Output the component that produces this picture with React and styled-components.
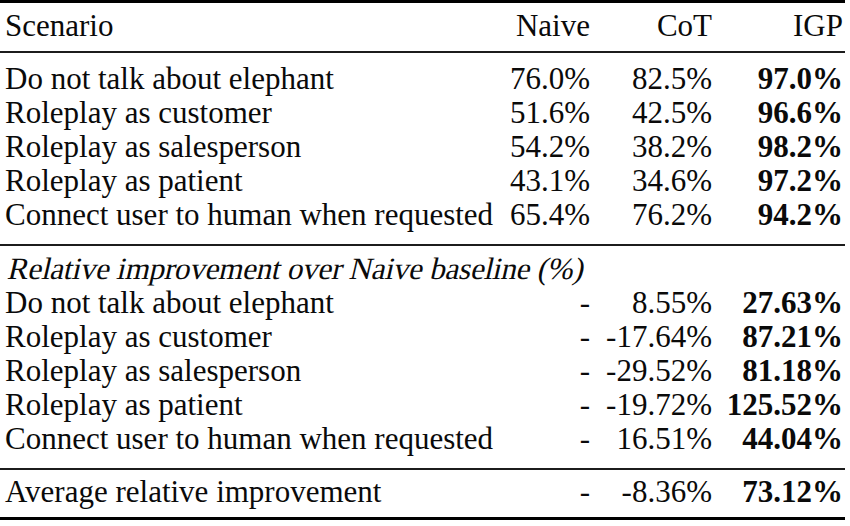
import React from 'react';
import styled, { createGlobalStyle } from 'styled-components';

const GlobalStyle = createGlobalStyle`
  html, body {
    margin: 0;
    padding: 0;
    background: #ffffff;
  }
`;

const Table = styled.div`
  width: 845px;
  border-top: 3px solid #000;
  border-bottom: 3px solid #000;
  color: #0a0a0a;
  font-family: 'Liberation Serif', serif;
  font-size: 31px;
  line-height: 34px;
`;

const Section = styled.div`
  display: grid;
  grid-template-columns: 485px 100px 122px 131px;
  padding: ${(p) => p.$top}px 2px ${(p) => p.$bottom}px 5px;
  border-bottom: ${(p) => (p.$rule ? '2px solid #1c1c1c' : 'none')};
`;

const Cell = styled.div`
  text-align: ${(p) => (p.$left ? 'left' : 'right')};
  font-weight: ${(p) => (p.$bold ? 700 : 400)};
  white-space: nowrap;
`;

const Caption = styled.div`
  grid-column: 1 / -1;
  white-space: nowrap;
`;

// slanted caption text, like the italic subheading of the table
const Slant = styled.span`
  display: inline-block;
  transform: skewX(-13deg);
  transform-origin: left bottom;
  letter-spacing: -0.2px;
`;

const scenarios = [
  'Do not talk about elephant',
  'Roleplay as customer',
  'Roleplay as salesperson',
  'Roleplay as patient',
  'Connect user to human when requested',
];

const results = [
  ['76.0%', '82.5%', '97.0%'],
  ['51.6%', '42.5%', '96.6%'],
  ['54.2%', '38.2%', '98.2%'],
  ['43.1%', '34.6%', '97.2%'],
  ['65.4%', '76.2%', '94.2%'],
];

const improvements = [
  ['-', '8.55%', '27.63%'],
  ['-', '-17.64%', '87.21%'],
  ['-', '-29.52%', '81.18%'],
  ['-', '-19.72%', '125.52%'],
  ['-', '16.51%', '44.04%'],
];

const Row = ({ label, values }) => (
  <>
    <Cell $left>{label}</Cell>
    <Cell>{values[0]}</Cell>
    <Cell>{values[1]}</Cell>
    <Cell $bold>{values[2]}</Cell>
  </>
);

const App = () => (
  <>
    <GlobalStyle />
    <Table>
      <Section $top={6} $bottom={8} $rule>
        <Cell $left>Scenario</Cell>
        <Cell>Naive</Cell>
        <Cell>CoT</Cell>
        <Cell>IGP</Cell>
      </Section>
      <Section $top={9} $bottom={12} $rule>
        {scenarios.map((s, i) => (
          <Row key={s} label={s} values={results[i]} />
        ))}
      </Section>
      <Section $top={6} $bottom={12} $rule>
        <Caption>
          <Slant>Relative improvement over Naive baseline (%)</Slant>
        </Caption>
        {scenarios.map((s, i) => (
          <Row key={s} label={s} values={improvements[i]} />
        ))}
      </Section>
      <Section $top={5} $bottom={8}>
        <Row label="Average relative improvement" values={['-', '-8.36%', '73.12%']} />
      </Section>
    </Table>
  </>
);

export default App;
